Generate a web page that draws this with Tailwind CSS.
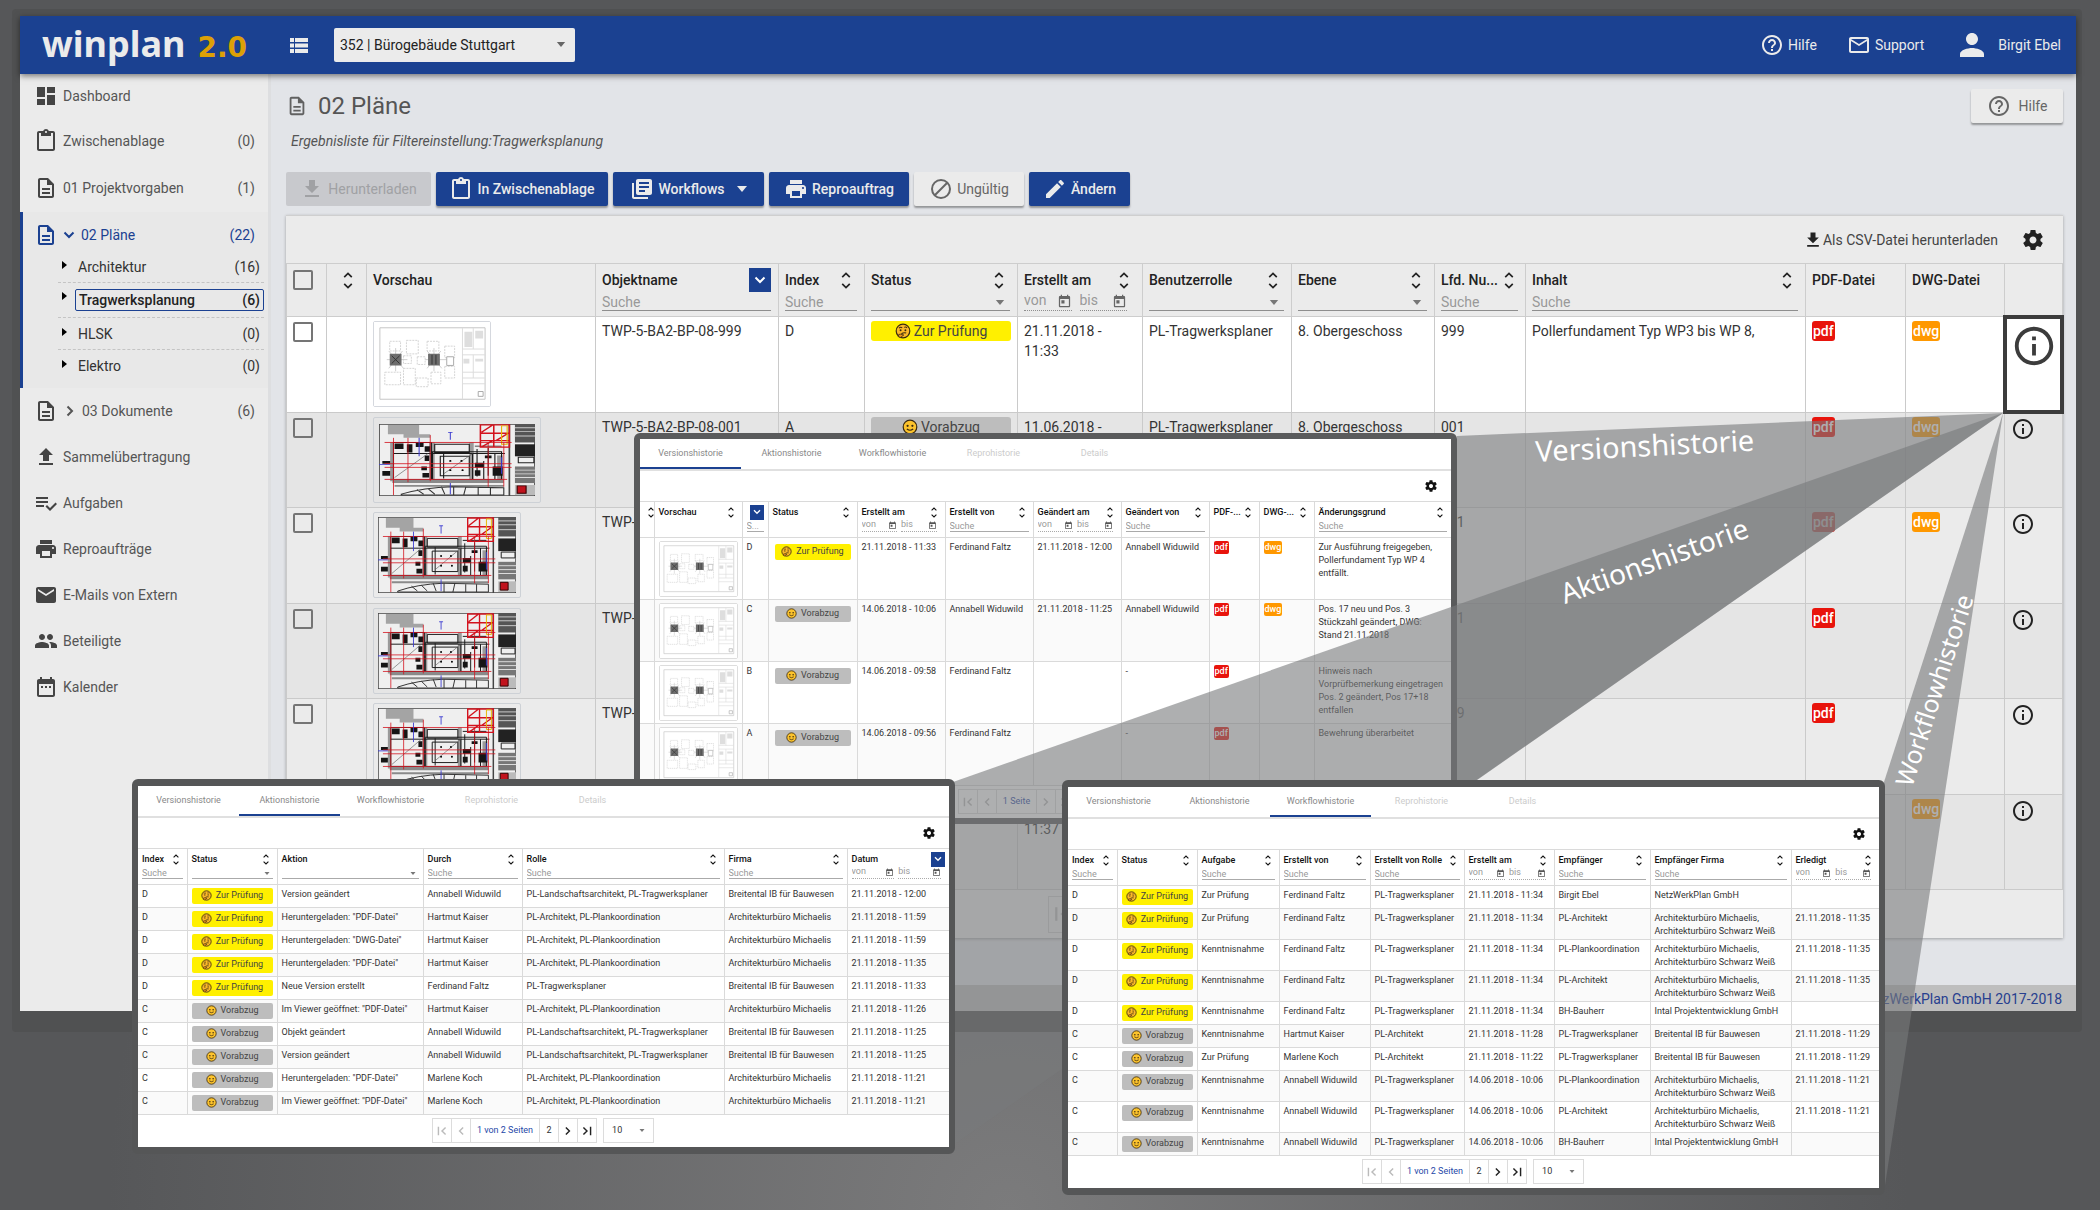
<!DOCTYPE html>
<html lang="de">
	<head>
		<meta charset="UTF-8" />
		<meta name="viewport" content="width=device-width, initial-scale=1.0" />
		<title>winplan 2.0 | 02 Pläne</title>
		<script src="https://cdn.jsdelivr.net/npm/@tailwindcss/browser@4"></script>
	</head>
	<body
		class="relative min-h-screen overflow-x-hidden bg-[radial-gradient(circle_at_48%_100%,#7b7b7c,#565759_900px)] font-[Roboto,sans-serif] text-sm text-[#333]"
	>
		<!-- icon set -->
		<svg class="hidden">
			<symbol id="dashboard" viewBox="0 0 24 24"><path d="M3 13h8V3H3v10zm0 8h8v-6H3v6zm10 0h8V11h-8v10zm0-18v6h8V3h-8z" /></symbol>
			<symbol id="paste" viewBox="0 0 24 24"><path d="M19 2h-4.18C14.4.84 13.3 0 12 0S9.6.84 9.18 2H5c-1.1 0-2 .9-2 2v16c0 1.1.9 2 2 2h14c1.1 0 2-.9 2-2V4c0-1.1-.9-2-2-2zm-7 0c.55 0 1 .45 1 1s-.45 1-1 1-1-.45-1-1 .45-1 1-1zm7 18H5V4h2v3h10V4h2v16z" /></symbol>
			<symbol id="doc" viewBox="0 0 24 24"><path d="M8 16h8v2H8zm0-4h8v2H8zm6-10H6c-1.1 0-2 .9-2 2v16c0 1.1.89 2 1.99 2H18c1.1 0 2-.9 2-2V8l-6-6zm4 18H6V4h7v5h5v11z" /></symbol>
			<symbol id="upload" viewBox="0 0 24 24"><path d="M9 16h6v-6h4l-7-7-7 7h4v6zm-4 2h14v2H5z" /></symbol>
			<symbol id="download" viewBox="0 0 24 24"><path d="M19 9h-4V3H9v6H5l7 7 7-7zM5 18v2h14v-2H5z" /></symbol>
			<symbol id="tasks" viewBox="0 0 24 24"><path d="M14 10H2v2h12v-2zm0-4H2v2h12V6zM2 16h8v-2H2v2zm19.5-4.5L23 13l-6.99 7-4.51-4.5L13 14l3.01 3 5.49-5.5z" /></symbol>
			<symbol id="print" viewBox="0 0 24 24"><path d="M19 8H5c-1.66 0-3 1.34-3 3v6h4v4h12v-4h4v-6c0-1.66-1.34-3-3-3zm-3 11H8v-5h8v5zm3-7c-.55 0-1-.45-1-1s.45-1 1-1 1 .45 1 1-.45 1-1 1zm-1-9H6v4h12V3z" /></symbol>
			<symbol id="mail" viewBox="0 0 24 24"><path d="M20 4H4c-1.1 0-1.99.9-1.99 2L2 18c0 1.1.9 2 2 2h16c1.1 0 2-.9 2-2V6c0-1.1-.9-2-2-2zm0 4l-8 5-8-5V6l8 5 8-5v2z" /></symbol>
			<symbol id="mail-outline" viewBox="0 0 24 24"><path d="M20 4H4c-1.1 0-1.99.9-1.99 2L2 18c0 1.1.9 2 2 2h16c1.1 0 2-.9 2-2V6c0-1.1-.9-2-2-2zm0 14H4V8l8 5 8-5v10zm-8-7L4 6h16l-8 5z" /></symbol>
			<symbol id="people" viewBox="0 0 24 24"><path d="M16 11c1.66 0 2.99-1.34 2.99-3S17.66 5 16 5c-1.66 0-3 1.34-3 3s1.34 3 3 3zm-8 0c1.66 0 2.99-1.34 2.99-3S9.66 5 8 5C6.34 5 5 6.34 5 8s1.34 3 3 3zm0 2c-2.33 0-7 1.17-7 3.5V19h14v-2.5c0-2.33-4.67-3.5-7-3.5zm8 0c-.29 0-.62.02-.97.05 1.16.84 1.97 1.97 1.97 3.45V19h6v-2.5c0-2.33-4.67-3.5-7-3.5z" /></symbol>
			<symbol id="calendar" viewBox="0 0 24 24"><path d="M9 11H7v2h2v-2zm4 0h-2v2h2v-2zm4 0h-2v2h2v-2zm2-7h-1V2h-2v2H8V2H6v2H5c-1.11 0-1.99.9-1.99 2L3 20c0 1.1.89 2 2 2h14c1.1 0 2-.9 2-2V6c0-1.1-.9-2-2-2zm0 16H5V9h14v11z" /></symbol>
			<symbol id="today" viewBox="0 0 24 24"><path d="M19 3h-1V1h-2v2H8V1H6v2H5c-1.11 0-1.99.9-1.99 2L3 19c0 1.1.89 2 2 2h14c1.1 0 2-.9 2-2V5c0-1.1-.9-2-2-2zm0 16H5V8h14v11zM7 10h5v5H7z" /></symbol>
			<symbol id="help" viewBox="0 0 24 24"><path d="M11 18h2v-2h-2v2zm1-16C6.48 2 2 6.48 2 12s4.48 10 10 10 10-4.48 10-10S17.52 2 12 2zm0 18c-4.41 0-8-3.59-8-8s3.59-8 8-8 8 3.59 8 8-3.59 8-8 8zm0-14c-2.21 0-4 1.79-4 4h2c0-1.1.9-2 2-2s2 .9 2 2c0 2-3 1.75-3 5h2c0-2.25 3-2.5 3-5 0-2.21-1.79-4-4-4z" /></symbol>
			<symbol id="person" viewBox="0 0 24 24"><path d="M12 12c2.21 0 4-1.79 4-4s-1.79-4-4-4-4 1.79-4 4 1.79 4 4 4zm0 2c-2.67 0-8 1.34-8 4v2h16v-2c0-2.66-5.33-4-8-4z" /></symbol>
			<symbol id="gear" viewBox="0 0 24 24"><path d="M19.43 12.98c.04-.32.07-.64.07-.98s-.03-.66-.07-.98l2.11-1.65c.19-.15.24-.42.12-.64l-2-3.46c-.12-.22-.39-.3-.61-.22l-2.49 1c-.52-.4-1.08-.73-1.69-.98l-.38-2.65C14.46 2.18 14.25 2 14 2h-4c-.25 0-.46.18-.49.42l-.38 2.65c-.61.25-1.17.59-1.69.98l-2.49-1c-.23-.09-.49 0-.61.22l-2 3.46c-.13.22-.07.49.12.64l2.11 1.65c-.04.32-.07.65-.07.98s.03.66.07.98l-2.11 1.65c-.19.15-.24.42-.12.64l2 3.46c.12.22.39.3.61.22l2.49-1c.52.4 1.08.73 1.69.98l.38 2.65c.03.24.24.42.49.42h4c.25 0 .46-.18.49-.42l.38-2.65c.61-.25 1.17-.59 1.69-.98l2.49 1c.23.09.49 0 .61-.22l2-3.46c.12-.22.07-.49-.12-.64l-2.11-1.65zM12 15.5c-1.93 0-3.5-1.57-3.5-3.5s1.57-3.5 3.5-3.5 3.5 1.57 3.5 3.5-1.57 3.5-3.5 3.5z" /></symbol>
			<symbol id="edit" viewBox="0 0 24 24"><path d="M3 17.25V21h3.75L17.81 9.94l-3.75-3.75L3 17.25zM20.71 7.04c.39-.39.39-1.02 0-1.41l-2.34-2.34c-.39-.39-1.02-.39-1.41 0l-1.83 1.83 3.75 3.75 1.83-1.83z" /></symbol>
			<symbol id="block" viewBox="0 0 24 24"><g fill="none" stroke="currentColor" stroke-width="2"><circle cx="12" cy="12" r="9" /><path d="M18 6 6 18" /></g></symbol>
			<symbol id="library" viewBox="0 0 24 24"><path d="M4 6H2v14c0 1.1.9 2 2 2h14v-2H4V6zm16-4H8c-1.1 0-2 .9-2 2v12c0 1.1.9 2 2 2h12c1.1 0 2-.9 2-2V4c0-1.1-.9-2-2-2zm-1 9H9V9h10v2zm-4 4H9v-2h6v2zm4-8H9V5h10v2z" /></symbol>
			<symbol id="info" viewBox="0 0 24 24"><path d="M11 17h2v-6h-2v6zm1-15C6.48 2 2 6.48 2 12s4.48 10 10 10 10-4.48 10-10S17.52 2 12 2zm0 18c-4.41 0-8-3.59-8-8s3.59-8 8-8 8 3.59 8 8-3.59 8-8 8zM11 9h2V7h-2v2z" /></symbol>
			<symbol id="list" viewBox="0 0 18 15"><path d="M0 0h4v4H0zM5 0h13v4H5zM0 5.500h4v4H0zM5 5.500h13v4H5zM0 11h4v4H0zM5 11h13v4H5z" /></symbol>
			<symbol id="drop" viewBox="0 0 10 6"><path d="M0 0h10L5 6z" /></symbol>
			<symbol id="down" viewBox="0 0 12 8"><path d="M1.5 1.5 6 6l4.500-4.500" fill="none" stroke="currentColor" stroke-width="2" /></symbol>
			<symbol id="right" viewBox="0 0 8 12"><path d="M1.500 1.500 6 6l-4.500 4.500" fill="none" stroke="currentColor" stroke-width="2" /></symbol>
			<symbol id="sort" viewBox="0 0 10 18"><path d="M1 5.500 5 1.500l4 4M1 12.500l4 4 4-4" fill="none" stroke="currentColor" stroke-width="1.800" /></symbol>
			<symbol id="first" viewBox="0 0 14 14"><path d="M2 1v12M12 2 7 7l5 5" fill="none" stroke="currentColor" stroke-width="2" /></symbol>
			<symbol id="prev" viewBox="0 0 14 14"><path d="M10 2 5 7l5 5" fill="none" stroke="currentColor" stroke-width="2" /></symbol>
			<symbol id="next" viewBox="0 0 14 14"><path d="m4 2 5 5-5 5" fill="none" stroke="currentColor" stroke-width="2" /></symbol>
			<symbol id="last" viewBox="0 0 14 14"><path d="M12 1v12M2 2l5 5-5 5" fill="none" stroke="currentColor" stroke-width="2" /></symbol>
			<symbol id="think" viewBox="0 0 20 20">
				<circle cx="10" cy="10" r="8.500" fill="#fbb829" stroke="#3a2a10" stroke-width="1.500" />
				<path d="M5 6.500q2-2 4-.5M11.500 5.500q2-1 3.500.5M8 13.500q3-2 6-1" fill="none" stroke="#3a2a10" stroke-width="1.300" />
				<circle cx="7" cy="9" r="1.200" fill="#3a2a10" /><circle cx="13" cy="9" r="1.200" fill="#3a2a10" />
				<path d="M4 17q0-4 3-3l4 1-4 3z" fill="#e8921c" stroke="#3a2a10" />
			</symbol>
			<symbol id="smile" viewBox="0 0 20 20">
				<circle cx="10" cy="10" r="8.500" fill="#fcc32c" stroke="#3a2a10" stroke-width="1.500" />
				<circle cx="7" cy="8.500" r="1.400" fill="#3a2a10" /><circle cx="13" cy="8.500" r="1.400" fill="#3a2a10" />
				<path d="M6 12.500q4 3 8 0" fill="none" stroke="#3a2a10" stroke-width="1.400" />
			</symbol>
			<!-- pale detail sheet -->
			<symbol id="sheet" viewBox="0 0 118 87" preserveAspectRatio="none">
				<rect width="118" height="87" fill="#fff" />
				<path d="M6 6h107v74H6z" fill="none" stroke="#c4c4c4" />
				<path d="M90 6v74M90 28h23M90 34h23M90 52h23M90 58h23M90 64h23M101 6v22M101 34v24" stroke="#dcdcdc" />
				<path d="M92 10h8v16h-8zM103 9h8v8h-8zM91 38h6v5h-6zM103 38h8v3h-8z" fill="#dedede" />
				<g fill="none" stroke="#d4d4d4" stroke-dasharray="2 1"><path d="M16 20h11v10H16zM33 19h12v14H33zM54 20h12v10H54zM72 25h10v12H72zM72 46h10v12H72zM11 52h16v13H11zM30 48h12v17H30zM43 58h12v9H43zM58 52h10v12H58zM30 35h8v8h-8zM44 36h8v8h-8z" /></g>
				<path d="M13 39h21M52 39h22M22 27v24M61 27v24M15 30l15 18M29 30 15 48M54 30l15 18M68 30 54 48" stroke="#cfcfcf" />
				<path d="M16 33h12v12H16zM55 33h12v12H55z" fill="#6d6d6d" />
				<path d="m18 35 8 8m0-8-8 8M59 34v10M63 34v10" stroke="#333" />
				<path d="M74 36h7v9h-7z" fill="#fff" stroke="#aaa" />
				<path d="M106 72h5v5h-5z" fill="none" stroke="#aaa" />
			</symbol>
			<!-- floor plan with sections -->
			<symbol id="plan" viewBox="0 0 140 78" preserveAspectRatio="none">
				<rect width="140" height="78" fill="#efefef" />
				<path d="M0 0h140M0 78h140M0 0v78M140 0v78M117 0v78" stroke="#444" stroke-width="1.500" />
				<path d="M8 1h28v10H8zM22 11h24v4H22z" fill="#a4a4a4" />
				<path d="M122 0h18v20h-18z" fill="#555" /><path d="M122 4h18M122 8h18M122 13h18" stroke="#ccc" />
				<path d="M122 22h18v13h-18z" fill="#222" /><path d="M125 36h14v6h-14z" fill="none" stroke="#222" />
				<path d="M122 46h18v18h-18z" fill="#777" /><path d="M122 50h18M122 54h18M122 58h18" stroke="#ddd" />
				<path d="M122 66h18v11h-18z" fill="#bbb" /><path d="M124 67h8v8h-8z" fill="#c1121c" stroke="#300" />
				<path d="M45 20h5v40h-5zM81 20h4v40h-4zM10 20h3v42h-3zM106 34h5v28h-5z" fill="#9a9a9a" />
				<path d="M13 20h34v40H13zM13 32h100M13 60h97V30H48v30M50 22h31v9H50zM55 35h26v21H55zM58 31v28M84 32v28M94 40v20M104 32v28M86 24h24M88 27v30M98 26v30" fill="none" stroke="#1a1a1a" />
				<path d="M14 21h8v6h-8zM25 22h5v9h-5zM33 20h7v5h-7zM41 24h5v6h-5zM41 34h4v6h-4zM38 46h5v4h-5zM39 53h6v5h-6zM102 46h9v10h-9zM86 42h8v5h-8zM86 50h5v6h-5zM3 40h7v3H3zM3 51h7v5H3zM95 34h6v3h-6z" fill="#151515" />
				<path d="M12 60h100v4H12zM14 66h98v2H14z" fill="#8a8a8a" />
				<path d="M20 76q20-7 46-8l46 1v8H20zM34 71l6 5M44 70l6 6M56 68l3 8M67 68v9M78 68l-2 9M89 69v8M100 69v8" fill="none" stroke="#333" />
				<path d="M14 58l30-26M58 54l26-22" stroke="#555" stroke-width=".6" />
				<circle cx="64" cy="40" r="1" /><circle cx="74" cy="40" r="1" /><circle cx="64" cy="50" r="1" /><circle cx="75" cy="50" r="1" />
				<path d="M91 1h26v24H91zM91 10h26M91 18h26M103 1v24M92 9l10-8M105 18l11-8M92 25l10-7" fill="none" stroke="#d3121d" stroke-width="1.400" />
				<path d="M110 2h5v20h-5z" fill="none" stroke="#e6b800" />
				<path d="M5 20h114M5 43h114M5 47h114M26 15v48M13 15v62M46 12v50M98 20v48M112 20v48M5 60h110" stroke="#d3121d" stroke-width=".8" />
				<path d="M64 9v8M62 9h4M36 15v20M64 64v12M110 36v18M0 44h10" stroke="#3a3ad0" stroke-width=".9" />
			</symbol>
		</svg>

		<!-- application window -->
		<div class="pt-[9px] pr-[18px] pl-3">
			<div class="rounded bg-[#505152] pt-[7px] pr-[6px] pb-[21px] pl-2">
				<header class="relative z-10 flex h-[58px] items-center bg-[#1b4191] px-[15px] text-[#ebebeb] shadow-[0_2px_6px_rgba(0,0,0,0.5)]">
					<a href="#" class="ml-[7px] flex w-[248px] items-baseline gap-3 pb-[2px] font-['Noto_Sans',sans-serif] text-4xl leading-none font-bold">winplan <span class="font-['DejaVu_Sans',sans-serif] text-[28px] text-[#dda006]">2.0</span></a>
					<button aria-label="Liste" class="w-11"><svg class="h-[15px] w-[18px] fill-current"><use href="#list" /></svg></button>
					<div class="relative h-[34px] w-[241px] text-[#222]">
						<select aria-label="Projekt" class="h-full w-full appearance-none rounded-xs bg-[#ebebeb] pl-[6px]"><option>352 | Bürogebäude Stuttgart</option></select>
						<svg class="pointer-events-none absolute top-[14px] right-[9px] h-[5px] w-[10px] fill-[#666]"><use href="#drop" /></svg>
					</div>
					<nav class="ml-auto flex items-center">
						<a href="#" class="flex items-center gap-1"><svg class="size-6 fill-current"><use href="#help" /></svg>Hilfe</a>
						<a href="#" class="ml-[30px] flex items-center gap-1"><svg class="size-6 fill-current"><use href="#mail-outline" /></svg>Support</a>
						<a href="#" class="ml-[30px] flex items-center gap-2"><svg class="size-9 fill-current"><use href="#person" /></svg>Birgit Ebel</a>
					</nav>
				</header>

				<div class="flex">
					<aside class="w-[251px] shrink-0 border-r-[3px] border-[#dddee0] bg-[#ebebeb] text-[#555]">
						<nav id="sidebar"></nav>
					</aside>

					<div class="flex min-w-0 flex-1 flex-col bg-[#e2e4e8]">
						<main class="pt-[15px] pr-[13px] pb-[47px] pl-[15px]">
							<div class="flex h-[34px] items-center">
								<svg class="size-[22px] fill-[#616161]"><use href="#doc" /></svg>
								<h1 class="ml-[10px] text-2xl font-normal text-[#555]">02 Pläne</h1>
								<button class="ml-auto flex h-[34px] w-[92px] items-center justify-center gap-2 rounded-xs bg-[#ebebeb] text-[#666] shadow-[0_2px_2px_rgba(0,0,0,0.35)]"><svg class="size-6 fill-current"><use href="#help" /></svg>Hilfe</button>
							</div>
							<p class="mt-2 pl-[5px] leading-5 text-[#555] italic">Ergebnisliste für Filtereinstellung:Tragwerksplanung</p>

							<div class="mt-[21px] flex gap-[5px] font-medium">
								<button disabled class="flex h-[34px] w-[145px] items-center justify-center gap-1 rounded-xs bg-[#c8c9cd] font-normal text-[#a0a1a4]"><svg class="size-6 fill-current"><use href="#download" /></svg>Herunterladen</button>
								<button class="flex h-[34px] w-[172px] items-center justify-center gap-1 rounded-xs bg-[#1b4191] text-[#ebebeb] shadow-[0_2px_2px_rgba(0,0,0,0.35)]"><svg class="size-6 fill-current"><use href="#paste" /></svg>In Zwischenablage</button>
								<button class="flex h-[34px] w-[151px] items-center justify-center gap-1 rounded-xs bg-[#1b4191] text-[#ebebeb] shadow-[0_2px_2px_rgba(0,0,0,0.35)]"><svg class="size-6 fill-current"><use href="#library" /></svg>Workflows<svg class="ml-2 h-[6px] w-[10px] fill-current"><use href="#drop" /></svg></button>
								<button class="flex h-[34px] w-[140px] items-center justify-center gap-1 rounded-xs bg-[#1b4191] text-[#ebebeb] shadow-[0_2px_2px_rgba(0,0,0,0.35)]"><svg class="size-6 fill-current"><use href="#print" /></svg>Reproauftrag</button>
								<button class="flex h-[34px] w-[110px] items-center justify-center gap-1 rounded-xs bg-[#ebebeb] font-normal text-[#666] shadow-[0_2px_2px_rgba(0,0,0,0.35)]"><svg class="size-6 fill-current"><use href="#block" /></svg>Ungültig</button>
								<button class="flex h-[34px] w-[101px] items-center justify-center gap-1 rounded-xs bg-[#1b4191] text-[#ebebeb] shadow-[0_2px_2px_rgba(0,0,0,0.35)]"><svg class="size-6 fill-current"><use href="#edit" /></svg>Ändern</button>
							</div>

							<section class="mt-[9px] border-t border-[#cfcfcf] bg-[#ebebeb] shadow-[0_1px_3px_rgba(0,0,0,0.3)]">
								<div class="flex h-[47px] items-center justify-end">
									<a href="#" class="flex items-center text-[#444]"><svg class="size-5 fill-[#222]"><use href="#download" /></svg>Als CSV-Datei herunterladen</a>
									<button aria-label="Einstellungen" class="mr-[18px] ml-[23px]"><svg class="size-6 fill-[#222]"><use href="#gear" /></svg></button>
								</div>
								<table id="plans" class="w-full table-fixed border-collapse"></table>
								<div id="plansPager" class="flex h-12 items-center justify-center"></div>
							</section>
						</main>
						<footer class="mt-auto h-[26px] bg-[#bebebe] pr-[14px] text-right leading-[28px] text-[#27408f]">© NetzWerkPlan GmbH 2017-2018</footer>
					</div>
				</div>
			</div>
		</div>

		<!-- history windows -->
		<div id="versions" class="absolute top-[433px] left-[634px] z-20 w-[823px] rounded-md border-6 border-[#5a5b5c] bg-white text-[9px] leading-[13px]"></div>

		<svg class="pointer-events-none absolute top-0 left-0 z-30 h-[1210px] w-[2100px]">
			<g fill="#787a7c" fill-opacity=".6">
				<path d="M2003 413 1457 436V794z" />
				<path d="M2003 413 953 782V1145z" />
				<path d="M2003 413 1884 782V1192z" />
			</g>
			<g fill="#fff" class="font-['Noto_Sans',sans-serif]">
				<text transform="translate(1536 462) rotate(-3)" font-size="29">Versionshistorie</text>
				<text transform="translate(1565 604) rotate(-20)" font-size="28">Aktionshistorie</text>
				<text transform="translate(1912 788) rotate(-72)" font-size="25">Workflowhistorie</text>
			</g>
		</svg>

		<div id="actions" class="absolute top-[779px] left-[132px] z-40 w-[823px] rounded-md border-x-6 border-y-7 border-[#555657] bg-white text-[9px] leading-[13px]"></div>
		<div id="workflows" class="absolute top-[780px] left-[1062px] z-40 w-[823px] rounded-md border-x-6 border-y-7 border-[#555657] bg-white text-[9px] leading-[13px]"></div>

		<script>
			const icon = (id, cls) => `<svg class="${cls}"><use href="#${id}"/></svg>`;

			// ---- sidebar ----
			const item = (ic, text, count = "") =>
				`<a href="#" class="flex h-[46px] items-center pr-[13px] pl-[14px]">${icon(ic, "size-6 fill-[#444]")}<span class="ml-[5px]">${text}</span><span class="ml-auto">${count}</span></a>`;
			const sub = (text, count) =>
				`<li class="flex h-8 items-center border-b border-dashed border-[#c4c4c4] pr-1 pl-1 text-[#333] last:border-0">
					<svg class="mb-1 h-2 w-[5px]" viewBox="0 0 5 8"><path d="M0 0l5 4-5 4z"/></svg>
					<a href="#" class="ml-[11px] flex flex-1 justify-between">${text}<span>${count}</span></a></li>`;

			document.getElementById("sidebar").innerHTML =
				`<a href="#" class="flex h-11 items-center pr-[13px] pl-[14px]">${icon("dashboard", "size-6 fill-[#444]")}<span class="ml-[5px]">Dashboard</span></a>` +
				item("paste", "Zwischenablage", "(0)") +
				`<div class="h-px"></div>` +
				item("doc", "01 Projektvorgaben", "(1)") +
				`<div class="mt-px border-l-3 border-[#1b4191] bg-[#e8e8e8] pb-[6px]">
					<a href="#" class="flex h-[39px] items-end pr-[13px] pb-1 pl-[11px] leading-6 text-[#1b4191]">${icon("doc", "size-6 fill-[#1b4191]")}
						${icon("down", "mb-2 ml-[5px] h-2 w-3")}<span class="ml-[6px]">02 Pläne</span><span class="ml-auto">(22)</span></a>
					<ul class="ml-[35px] pr-1">${sub("Architektur", "(16)")}
						<li class="flex h-[35px] items-center border-b border-dashed border-[#c4c4c4] pl-1 text-[#222]">
							<svg class="mb-2 h-2 w-[5px]" viewBox="0 0 5 8"><path d="M0 0l5 4-5 4z"/></svg>
							<a href="#" class="ml-2 flex h-[22px] flex-1 items-center justify-between rounded-xs border border-[#1b4191] px-[3px] font-medium">Tragwerksplanung<span>(6)</span></a></li>
						${sub("HLSK", "(0)")}${sub("Elektro", "(0)")}</ul>
				</div>` +
				`<a href="#" class="flex h-[46px] items-center pr-[13px] pl-[14px]">${icon("doc", "size-6 fill-[#444]")}${icon("right", "ml-2 h-3 w-2")}<span class="ml-2">03 Dokumente</span><span class="ml-auto">(6)</span></a>` +
				item("upload", "Sammelübertragung") +
				item("tasks", "Aufgaben") +
				item("print", "Reproaufträge") +
				item("mail", "E-Mails von Extern") +
				item("people", "Beteiligte") +
				item("calendar", "Kalender");

			// ---- shared table parts, in the size of the page and of the windows ----
			const big = {
				th: "h-[53px] overflow-hidden border border-[#cdcdcd] pr-[7px] pl-[6px] pt-[6px] align-top text-left font-medium text-[#222]",
				row: "flex h-5 items-center justify-between leading-5",
				box: "flex h-6 w-[22px] shrink-0 items-center justify-center",
				blue: "flex h-6 w-[22px] shrink-0 items-center justify-center bg-[#1b4191] text-white",
				sort: "h-[17px] w-[10px]",
				arrow: "h-2 w-3",
				input: "block h-[21px] w-full min-w-0 border-b border-[#8e8e8e] pt-1 font-normal text-ellipsis placeholder:text-[#999]",
				select: "block h-[21px] w-full appearance-none border-b border-[#8e8e8e]",
				drop: "pointer-events-none absolute top-[10px] right-[5px] h-[5px] w-[10px] fill-[#777]",
				date: "flex h-[21px] min-w-0 flex-1 items-end border-b border-dotted border-[#8e8e8e]",
				dateInput: "w-0 min-w-0 flex-1 font-normal placeholder:text-[#999]",
				cal: "mb-px size-[15px] shrink-0 fill-[#666]",
				gap: "mr-2 flex gap-2",
				badge: "flex h-5 items-center justify-center gap-[3px] rounded-[3px]",
				face: "size-4",
				tag: "inline-flex h-5 items-center justify-center rounded-[3px] px-px font-medium text-white",
				btn: "flex h-[37px] min-w-[29px] items-center justify-center border border-[#cdcdcd] -ml-px",
				pg: "size-4",
			};
			const small = {
				th: "h-[35px] overflow-hidden border border-t-0 border-[#dadada] px-1 pt-1 align-top text-left font-medium text-[#111] first:border-l-0 last:border-r-0",
				row: "flex h-3 items-center justify-between leading-3",
				box: "flex h-[15px] w-[14px] shrink-0 items-center justify-center",
				blue: "flex h-[15px] w-[14px] shrink-0 items-center justify-center bg-[#1b4191] text-white",
				sort: "h-[11px] w-[6px]",
				arrow: "h-[6px] w-2",
				input: "block h-[14px] w-full min-w-0 border-b border-[#aaa] pt-[2px] font-normal text-ellipsis placeholder:text-[#999]",
				select: "block h-[14px] w-full appearance-none border-b border-[#aaa]",
				drop: "pointer-events-none absolute top-[7px] right-[3px] h-[3px] w-[6px] fill-[#777]",
				date: "flex h-[14px] min-w-0 flex-1 items-end border-b border-dotted border-[#aaa]",
				dateInput: "w-0 min-w-0 flex-1 font-normal placeholder:text-[#999]",
				cal: "mb-px size-[9px] shrink-0 fill-[#555]",
				gap: "mr-1 flex gap-1",
				badge: "flex h-4 items-center justify-center gap-1 rounded-xs",
				face: "size-[11px]",
				tag: "inline-flex h-[13px] items-center justify-center rounded-xs px-px font-medium text-white",
				btn: "flex h-[25px] min-w-5 items-center justify-center border border-[#dcdcdc] -ml-px",
				pg: "size-[10px]",
			};

			// column: [title, width, filter, sort]
			const head = (s, cols) =>
				`<colgroup>${cols.map((c) => `<col${c[1] ? ` style="width:${c[1]}px"` : ""}>`).join("")}</colgroup><thead><tr>` +
				cols
					.map(([title, , filter, sort]) => {
						const mark = sort === "blue" ? `<span class="${s.blue}">${icon("down", s.arrow)}</span>` : sort ? `<span class="${s.box}">${icon("sort", s.sort)}</span>` : "";
						const field = {
							text: `<input aria-label="${title || "Index"}" placeholder="Suche" class="${s.input}">`,
							short: `<input aria-label="Index" placeholder="S..." class="${s.input}">`,
							select: `<div class="relative"><select aria-label="${title}" class="${s.select}"></select>${icon("drop", s.drop)}</div>`,
							date: `<div class="${s.gap}"><span class="${s.date}"><input aria-label="${title} von" placeholder="von" class="${s.dateInput}">${icon("today", s.cal)}</span><span class="${s.date}"><input aria-label="${title} bis" placeholder="bis" class="${s.dateInput}">${icon("today", s.cal)}</span></div>`,
						}[filter] || "";
						const label = title === "all" ? `<input type="checkbox" aria-label="Alle auswählen" class="size-5 shrink-0 appearance-none rounded-xs border-2 border-[#757575]">` : `<span class="whitespace-nowrap">${title}</span>`;
						return `<th class="${s.th}"><div class="${s.row}">${label}${mark}</div>${field}</th>`;
					})
					.join("") +
				"</tr></thead>";

			const badge = (s, d) =>
				d ? `<span class="${s.badge} bg-[#fff000] text-[#444]">${icon("think", s.face)}Zur Prüfung</span>` : `<span class="${s.badge} bg-[#bdbdbd] text-[#444]">${icon("smile", s.face)}Vorabzug</span>`;
			const pdf = (s) => `<a href="#" class="${s.tag} bg-[#e8140c]">pdf</a>`;
			const dwg = (s) => `<a href="#" class="${s.tag} bg-[#ff9800]">dwg</a>`;

			const pager = (s, label, more, size) => `
				<button aria-label="Erste" class="${s.btn} text-[#bbb]">${icon("first", s.pg)}</button>
				<button aria-label="Zurück" class="${s.btn} text-[#bbb]">${icon("prev", s.pg)}</button>
				<span class="${s.btn} px-[6px] text-[#1f48a8]">${label}</span>
				${more ? `<button class="${s.btn}">2</button>` : ""}
				<button aria-label="Weiter" class="${s.btn} ${more ? "text-[#222]" : "text-[#bbb]"}">${icon("next", s.pg)}</button>
				<button aria-label="Letzte" class="${s.btn} ${more ? "text-[#222]" : "text-[#bbb]"}">${icon("last", s.pg)}</button>
				<span class="relative ml-[6px]"><select aria-label="Zeilen" class="${size} appearance-none border border-[#dcdcdc] pl-2"><option>10</option></select>${icon("drop", "pointer-events-none absolute top-[11px] right-[9px] h-[3px] w-[6px] fill-[#777]")}</span>`;

			// ---- plan list ----
			const planCols = [
				["all", 40], ["", 40, "", 1], ["Vorschau", 229], ["Objektname", 183, "text", "blue"], ["Index", 86, "text", 1],
				["Status", 153, "select", 1], ["Erstellt am", 125, "date", 1], ["Benutzerrolle", 149, "select", 1], ["Ebene", 143, "select", 1],
				["Lfd. Nu...", 91, "text", 1], ["Inhalt", 0, "text", 1], ["PDF-Datei", 100], ["DWG-Datei", 99], ["", 58],
			];
			const plans = [
				["TWP-5-BA2-BP-08-999", "D", "21.11.2018 - 11:33", "999", "Pollerfundament Typ WP3 bis WP 8,", 1, 1],
				["TWP-5-BA2-BP-08-001", "A", "11.06.2018 - 11:33", "001", "", 1, 1],
				["TWP-5-BA2-BP-07-001", "A", "11.06.2018 - 11:34", "001", "", 1, 1],
				["TWP-5-BA2-BP-06-001", "A", "11.06.2018 - 11:35", "001", "", 1, 0],
				["TWP-5-BA2-BP-05-999", "A", "11.06.2018 - 11:36", "999", "", 1, 0],
				["TWP-5-BA2-BP-04-001", "A", "11.06.2018 - 11:37", "001", "", 1, 1],
			];
			const planTd = "border border-[#cacaca] px-[6px] pt-1 align-top leading-5";
			document.getElementById("plans").innerHTML =
				head(big, planCols) +
				"<tbody>" +
				plans
					.map(
						(p, i) => `<tr class="${i === 0 ? "h-24 bg-white" : i % 2 ? "h-[95px] bg-[#e5e5e5]" : "h-24 bg-[#ebebeb]"}">
						<td class="${planTd}"><input type="checkbox" aria-label="${p[0]}" class="mt-px block size-5 appearance-none rounded-xs border-2 border-[#757575]"></td>
						<td class="${planTd}"></td>
						<td class="${planTd}">${
							i === 0
								? `<div class="h-[86px] w-[118px] rounded-xs border border-[#d5d8de]">${icon("sheet", "h-full w-full")}</div>`
								: `<div class="${i === 1 ? "h-[86px] w-[168px] px-[5px] py-[6px]" : "h-[86px] w-[148px] px-1 py-[4px]"} rounded-xs border border-[#cdd1d6]">${icon("plan", "h-full w-full")}</div>`
						}</td>
						<td class="${planTd}">${p[0]}</td>
						<td class="${planTd}">${p[1]}</td>
						<td class="${planTd}">${badge(big, i === 0)}</td>
						<td class="${planTd}">${p[2]}</td>
						<td class="${planTd}">PL-Tragwerksplaner</td>
						<td class="${planTd}">8. Obergeschoss</td>
						<td class="${planTd}">${p[3]}</td>
						<td class="${planTd}">${p[4]}</td>
						<td class="${planTd}">${p[5] ? pdf(big) : ""}</td>
						<td class="${planTd}">${p[6] ? dwg(big) : ""}</td>
						<td class="${planTd} relative">${
							i === 0
								? `<button aria-label="Historie" class="absolute -inset-[2px] flex justify-center border-4 border-[#3c3c3c] bg-white pt-1">${icon("info", "size-[46px] fill-[#3c3c3c]")}</button>`
								: `<button aria-label="Historie" class="block">${icon("info", "size-6 fill-[#222]")}</button>`
						}</td></tr>`
					)
					.join("") +
				"</tbody>";
			document.getElementById("plansPager").innerHTML = pager(big, "1 Seite", false, "h-[37px] w-[78px]");

			// ---- history windows ----
			const tabs = ["Versionshistorie", "Aktionshistorie", "Workflowhistorie", "Reprohistorie", "Details"];
			const td = "border border-[#dadada] px-1 pt-[3px] pb-px align-top first:border-l-0 last:border-r-0";
			function historyWindow(id, active, cols, rows, rowClass, label, more) {
				document.getElementById(id).innerHTML = `
					<div role="tablist" class="flex h-8 border-b-2 border-[#e0e0e0]">${tabs
						.map((t, i) => `<button role="tab" class="w-[101px] border-b-2 ${i === active ? "border-[#1b4191]" : "border-transparent"} ${i > 2 ? "text-[#ccc]" : "text-[#888]"}">${t}</button>`)
						.join("")}</div>
					<div class="flex h-[31px] items-center justify-end border-b border-[#dadada] pr-[13px]"><button aria-label="Einstellungen">${icon("gear", "size-[14px] fill-[#111]")}</button></div>
					<table class="w-full table-fixed border-collapse">${head(small, cols)}<tbody>${rows
						.map((r, n) => `<tr class="${rowClass} ${n % 2 ? "bg-[#fafafa]" : ""}">${r.map((c) => `<td class="${td}">${c}</td>`).join("")}</tr>`)
						.join("")}</tbody></table>
					<div class="flex h-8 items-center justify-center">${pager(small, label, more, "h-[25px] w-[51px]")}</div>`;
			}

			const thumb = `<div class="h-[56px] w-[79px] rounded-xs border border-[#ddd]">${icon("sheet", "h-full w-full")}</div>`;
			historyWindow("versions", 0,
				[["", 14, "", 1], ["Vorschau", 88, "", 1], ["", 26, "short", "blue"], ["Status", 89, "", 1], ["Erstellt am", 88, "date", 1], ["Erstellt von", 88, "text", 1], ["Geändert am", 88, "date", 1], ["Geändert von", 88, "text", 1], ["PDF-...", 50, "", 1], ["DWG-...", 55, "", 1], ["Änderungsgrund", 137, "text", 1]],
				[
					["D", "21.11.2018 - 11:33", "Ferdinand Faltz", "21.11.2018 - 12:00", "Annabell Widuwild", 1, "Zur Ausführung freigegeben, Pollerfundament Typ WP 4 entfällt."],
					["C", "14.06.2018 - 10:06", "Annabell Widuwild", "21.11.2018 - 11:25", "Annabell Widuwild", 1, "Pos. 17 neu und Pos. 3<br>Stückzahl geändert, DWG:<br>Stand 21.11.2018"],
					["B", "14.06.2018 - 09:58", "Ferdinand Faltz", "", "-", 0, "Hinweis nach<br>Vorprüfbemerkung eingetragen<br>Pos. 2 geändert, Pos 17+18<br>entfallen"],
					["A", "14.06.2018 - 09:56", "Ferdinand Faltz", "", "-", 0, "Bewehrung überarbeitet"],
				].map((v) => ["", thumb, v[0], `<div class="px-[2px] pt-[3px]">${badge(small, v[0] === "D")}</div>`, v[1], v[2], v[3], v[4], pdf(small), v[5] ? dwg(small) : "", v[6]]),
				"h-[62px] whitespace-normal", "1 Seite", false);

			const LA = "PL-Landschaftsarchitekt, PL-Tragwerksplaner";
			const PK = "PL-Architekt, PL-Plankoordination";
			const BI = "Breitental IB für Bauwesen";
			const AM = "Architekturbüro Michaelis";
			historyWindow("actions", 1,
				[["Index", 49, "text", 1], ["Status", 90, "select", 1], ["Aktion", 146, "select"], ["Durch", 99, "text", 1], ["Rolle", 202, "text", 1], ["Firma", 123, "text", 1], ["Datum", 102, "date", "blue"]],
				[
					["D", "Version geändert", "Annabell Widuwild", LA, BI, "12:00"],
					["D", 'Heruntergeladen: "PDF-Datei"', "Hartmut Kaiser", PK, AM, "11:59"],
					["D", 'Heruntergeladen: "DWG-Datei"', "Hartmut Kaiser", PK, AM, "11:59"],
					["D", 'Heruntergeladen: "PDF-Datei"', "Hartmut Kaiser", PK, AM, "11:35"],
					["D", "Neue Version erstellt", "Ferdinand Faltz", "PL-Tragwerksplaner", BI, "11:33"],
					["C", 'Im Viewer geöffnet: "PDF-Datei"', "Hartmut Kaiser", PK, AM, "11:26"],
					["C", "Objekt geändert", "Annabell Widuwild", LA, BI, "11:25"],
					["C", "Version geändert", "Annabell Widuwild", LA, BI, "11:25"],
					["C", 'Heruntergeladen: "PDF-Datei"', "Marlene Koch", PK, AM, "11:21"],
					["C", 'Im Viewer geöffnet: "PDF-Datei"', "Marlene Koch", PK, AM, "11:21"],
				].map((a) => [a[0], badge(small, a[0] === "D"), a[1], a[2], a[3], a[4], "21.11.2018 - " + a[5]]),
				"h-[23px] whitespace-nowrap", "1 von 2 Seiten", true);

			const FF = "Ferdinand Faltz";
			const AW = "Annabell Widuwild";
			const TP = "PL-Tragwerksplaner";
			const MS = "Architekturbüro Michaelis,<br>Architekturbüro Schwarz Weiß";
			const IP = "Intal Projektentwicklung GmbH";
			historyWindow("workflows", 2,
				[["Index", 49, "text", 1], ["Status", 80, "", 1], ["Aufgabe", 82, "text", 1], ["Erstellt von", 91, "text", 1], ["Erstellt von Rolle", 94, "text", 1], ["Erstellt am", 90, "date", 1], ["Empfänger", 96, "text", 1], ["Empfänger Firma", 141, "text", 1], ["Erledigt", 88, "date", 1]],
				[
					["D", "Zur Prüfung", FF, TP, "21.11.2018 - 11:34", "Birgit Ebel", "NetzWerkPlan GmbH", ""],
					["D", "Zur Prüfung", FF, TP, "21.11.2018 - 11:34", "PL-Architekt", MS, "21.11.2018 - 11:35"],
					["D", "Kenntnisnahme", FF, TP, "21.11.2018 - 11:34", "PL-Plankoordination", MS, "21.11.2018 - 11:35"],
					["D", "Kenntnisnahme", FF, TP, "21.11.2018 - 11:34", "PL-Architekt", MS, "21.11.2018 - 11:35"],
					["D", "Kenntnisnahme", FF, TP, "21.11.2018 - 11:34", "BH-Bauherr", IP, ""],
					["C", "Kenntnisnahme", "Hartmut Kaiser", "PL-Architekt", "21.11.2018 - 11:28", TP, BI, "21.11.2018 - 11:29"],
					["C", "Zur Prüfung", "Marlene Koch", "PL-Architekt", "21.11.2018 - 11:22", TP, BI, "21.11.2018 - 11:29"],
					["C", "Kenntnisnahme", AW, TP, "14.06.2018 - 10:06", "PL-Plankoordination", MS, "21.11.2018 - 11:21"],
					["C", "Kenntnisnahme", AW, TP, "14.06.2018 - 10:06", "PL-Architekt", MS, "21.11.2018 - 11:21"],
					["C", "Kenntnisnahme", AW, TP, "14.06.2018 - 10:06", "BH-Bauherr", IP, ""],
				].map((w) => [w[0], badge(small, w[0] === "D"), ...w.slice(1)]),
				"h-[23px] whitespace-nowrap", "1 von 2 Seiten", true);
		</script>
	</body>
</html>
